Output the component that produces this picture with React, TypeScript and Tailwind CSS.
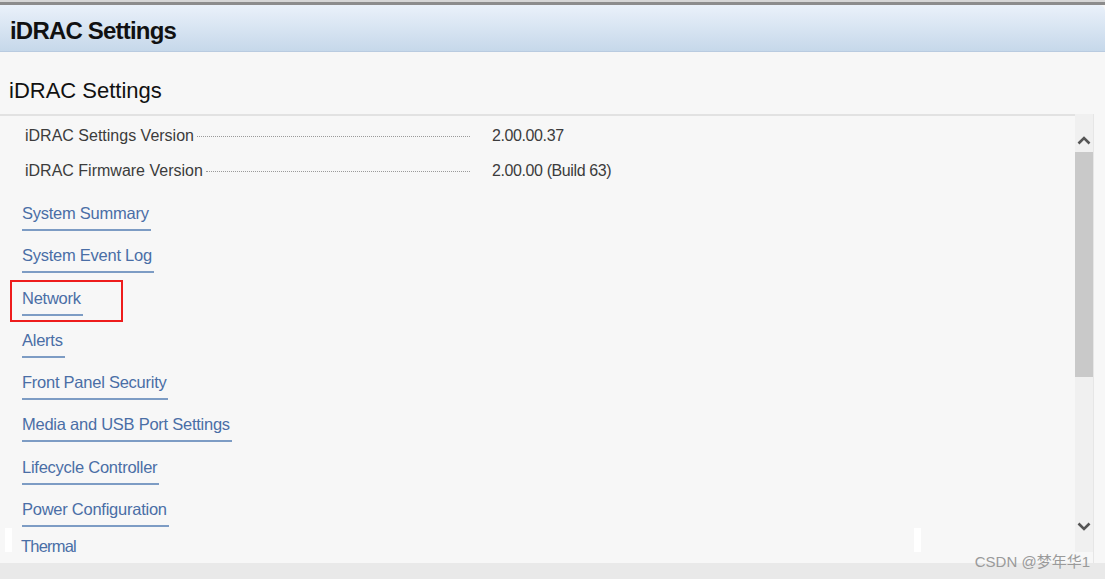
import * as React from 'react';

const links = [
  'System Summary',
  'System Event Log',
  'Network',
  'Alerts',
  'Front Panel Security',
  'Media and USB Port Settings',
  'Lifecycle Controller',
  'Power Configuration',
];

function InfoRow({ label, value }: { label: string; value: string }) {
  return (
    <div className="flex h-[35px] items-center text-[16px] text-[#3c3c3c]">
      <div className="flex w-[470px] items-center pl-[25px]">
        <span className="whitespace-nowrap pr-[3px] tracking-[0px]">{label}</span>
        <span className="mt-[2px] flex-1 border-t border-dotted border-[#9a9a9a]" />
      </div>
      <span className="whitespace-nowrap pl-[22px] tracking-[-0.4px]">{value}</span>
    </div>
  );
}

function NavLink({ label, boxed }: { label: string; boxed?: boolean }) {
  return (
    <div className="relative flex h-[42.3px] items-start pl-[22px]">
      {boxed && (
        <div className="absolute left-[10px] top-[-7px] h-[42px] w-[113px] border-2 border-[#ee1c1c]" />
      )}
      <span className="border-b-2 border-[#7d9cc4] pb-[5px] pr-[2px] text-[16.5px] leading-[22px] tracking-[-0.25px] text-[#4a6ea6]">
        {label}
      </span>
    </div>
  );
}

export default function App() {
  return (
    <div
      className="relative flex h-[579px] w-[1105px] flex-col overflow-hidden bg-[#f7f7f7]"
      style={{ fontFamily: '"Liberation Sans", Arial, "Noto Sans CJK SC", sans-serif' }}
    >
      {/* header bar */}
      <div className="h-[2px] shrink-0 bg-[#d6d6d6]" />
      <div className="h-[3px] shrink-0 bg-[#8c8c8c]" />
      <div className="flex h-[47px] shrink-0 items-center rounded-tr-[6px] border-b border-[#b9cbe0] bg-gradient-to-b from-[#eaf1fa] to-[#c6d8ea] pl-[10px] pt-[6px]">
        <h1 className="text-[24px] font-bold tracking-[-0.8px] text-[#111]">iDRAC Settings</h1>
      </div>

      <div className="flex h-[62px] shrink-0 items-center pl-[9px] pt-[15px]">
        <h2 className="text-[22px] tracking-[0px] text-[#111]">iDRAC Settings</h2>
      </div>

      <div className="flex min-h-0 flex-1 overflow-hidden">
        <div className="relative flex-1 border-t-2 border-[#e2e2e2]">
          <div className="pt-[2px]">
            <InfoRow label="iDRAC Settings Version" value="2.00.00.37" />
            <InfoRow label="iDRAC Firmware Version" value="2.00.00 (Build 63)" />
          </div>
          <div className="pt-[14px]">
            {links.map((l) => (
              <NavLink key={l} label={l} boxed={l === 'Network'} />
            ))}
            <div className="-mt-[5px] pl-[21px] text-[16.5px] leading-[22px] tracking-[-0.8px] text-[#4a6ea6]">
              Thermal
            </div>
          </div>
          <div className="absolute left-[5px] top-[412px] h-[24px] w-[7px] bg-white" />
          <div className="absolute left-[914px] top-[412px] h-[24px] w-[7px] bg-white" />
        </div>

        {/* scrollbar */}
        <div className="mb-[11px] flex w-[18px] flex-col bg-[#f0f0f0]">
          <div className="flex h-[38px] items-center justify-center pt-[14px]">
            <svg width="14" height="9" viewBox="0 0 14 9">
              <path d="M1.5 7.5 L7 2 L12.5 7.5" fill="none" stroke="#555" strokeWidth="2.6" />
            </svg>
          </div>
          <div className="h-[225px] bg-[#c9c9c9]" />
          <div className="flex-1" />
          <div className="flex h-[34px] items-start justify-center pt-[4px]">
            <svg width="14" height="9" viewBox="0 0 14 9">
              <path d="M1.5 1.5 L7 7 L12.5 1.5" fill="none" stroke="#555" strokeWidth="2.6" />
            </svg>
          </div>
        </div>
        <div className="w-[12px] border-l border-[#e6e6e6]" />
      </div>

      <div className="h-[16px] shrink-0 bg-[#e9e9e9]" />

      <div className="absolute bottom-[6px] right-[15px] text-[15px] text-[#9a9a9a]">CSDN @梦年华1</div>
    </div>
  );
}
